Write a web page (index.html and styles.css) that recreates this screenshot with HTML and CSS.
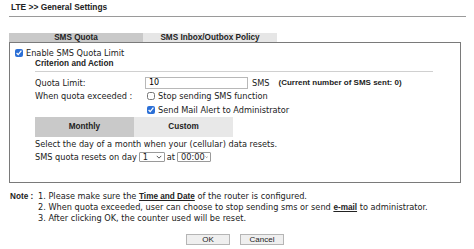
FILE: index.html
```html
<!DOCTYPE html>
<html lang="en">
<head>
    <meta charset="UTF-8">
    <title>LTE General Settings</title>
    <link rel="stylesheet" href="styles.css">
</head>
<body>

    <!-- Page Title -->
    <div class="page-title">LTE &gt;&gt; General Settings</div>

    <!-- Tabs -->
    <div class="tabs">
        <div class="tab active">SMS Quota</div>
        <div class="tab">SMS Inbox/Outbox Policy</div>
    </div>

    <!-- SMS Quota Panel -->
    <div class="panel">
        <label class="enable-row">
            <input type="checkbox" class="cb" checked>
            <span>Enable SMS Quota Limit</span>
        </label>

        <div class="section">
            <div class="section-title">Criterion and Action</div>

            <div class="form-row first">
                <span class="row-label">Quota Limit:</span>
                <input type="text" class="quota-input" value="10">
                <span class="unit">SMS</span>
                <span class="count">(Current number of SMS sent: 0)</span>
            </div>

            <div class="form-row">
                <span class="row-label">When quota exceeded :</span>
                <label class="option">
                    <input type="checkbox" class="cb">
                    <span>Stop sending SMS function</span>
                </label>
            </div>
            <div class="form-row">
                <span class="row-label"></span>
                <label class="option">
                    <input type="checkbox" class="cb" checked>
                    <span>Send Mail Alert to Administrator</span>
                </label>
            </div>

            <div class="sub-tabs">
                <div class="sub-tab active">Monthly</div>
                <div class="sub-tab">Custom</div>
            </div>

            <div class="text-row">Select the day of a month when your (cellular) data resets.</div>
            <div class="text-row">
                <span>SMS quota resets on day</span>
                <span class="select day-select">
                    <span>1</span>
                    <svg class="chevron" viewBox="0 0 8 5"><path d="M1 1 L4 4 L7 1" fill="none" stroke="#333" stroke-width="1.1"/></svg>
                </span>
                <span>at</span>
                <span class="select time-select">
                    <span>00:00</span>
                    <svg class="chevron" viewBox="0 0 8 5"><path d="M1 1 L4 4 L7 1" fill="none" stroke="#333" stroke-width="1.1"/></svg>
                </span>
            </div>
        </div>
    </div>

    <!-- Notes -->
    <div class="notes">
        <div class="note-label">Note :</div>
        <div class="note-list">
            <div>1. Please make sure the <b class="link">Time and Date</b> of the router is configured.</div>
            <div>2. When quota exceeded, user can choose to stop sending sms or send <b class="link">e-mail</b> to administrator.</div>
            <div>3. After clicking OK, the counter used will be reset.</div>
        </div>
    </div>

    <!-- Buttons -->
    <div class="buttons">
        <button class="btn">OK</button>
        <button class="btn">Cancel</button>
    </div>

</body>
</html>
```

FILE: styles.css
```css
/* General Styles */
body {
    margin: 0;
    width: 474px;
    height: 249px;
    background: #fff;
    font-family: "DejaVu Sans", Verdana, sans-serif;
    font-size: 8.2px;
    color: #222;
    overflow: hidden;
}

.page-title {
    font-family: "Liberation Sans", Arial, sans-serif;
    font-weight: bold;
    font-size: 8.4px;
    margin: 0 8px 0 9px;
    padding: 2px 0 0 2px;
    height: 14px;
    line-height: 10px;
    border-bottom: 1px solid #9a9a9a;
}

/* Tabs */
.tabs {
    display: flex;
    margin: 16px 0 0 9px;
}

.tab {
    width: 134px;
    height: 9px;
    line-height: 9px;
    text-align: center;
    font-family: "Liberation Sans", Arial, sans-serif;
    font-weight: bold;
    font-size: 8.2px;
    background: #e6e6e6;
}

.tab.active {
    background: #c9c9c9;
}

.panel {
    margin-left: 9px;
    width: 452px;
    height: 141px;
    border: 1px solid #7a7a7a;
    box-sizing: border-box;
    padding: 5px 0 0 4px;
}

.cb {
    width: 8px;
    height: 8px;
    margin: 0 3px 0 0;
    accent-color: #2b6fd6;
}

.enable-row {
    display: flex;
    align-items: center;
    height: 10px;
    margin-left: 1px;
}

.section {
    margin-left: 21px;
    width: 398px;
}

.section-title {
    font-family: "Liberation Sans", Arial, sans-serif;
    font-weight: bold;
    font-size: 8.2px;
    height: 13px;
    line-height: 11px;
    border-bottom: 1px solid #d0d0d0;
}

.form-row {
    display: flex;
    align-items: center;
    height: 13.5px;
}

.form-row.first {
    margin-top: 4px;
}

.row-label {
    width: 110px;
}

.quota-input {
    width: 103px;
    height: 12px;
    box-sizing: border-box;
    border: 1px solid #b8b8b8;
    font-family: "DejaVu Sans", Verdana, sans-serif;
    font-size: 8px;
    padding: 0 3px;
    margin: 0;
}

.unit {
    margin-left: 4px;
}

.count {
    margin-left: 9px;
    font-family: "Liberation Sans", Arial, sans-serif;
    font-weight: bold;
    font-size: 8px;
}

.option {
    display: flex;
    align-items: center;
    margin-left: 2px;
}

/* Monthly / Custom */
.sub-tabs {
    display: flex;
}

.sub-tab {
    width: 99px;
    height: 20px;
    line-height: 20px;
    text-align: center;
    font-family: "Liberation Sans", Arial, sans-serif;
    font-weight: bold;
    font-size: 8.2px;
    background: #e8e8e8;
}

.sub-tab.active {
    background: #c9c9c9;
}

.text-row {
    display: flex;
    align-items: center;
    gap: 2px;
    height: 12px;
    margin-top: 1px;
}

.select {
    display: flex;
    align-items: center;
    justify-content: space-between;
    height: 10px;
    box-sizing: border-box;
    padding: 0 2px 0 3px;
    border: 1px solid #9a9a9a;
    border-radius: 1px;
    background: #fff;
}

.day-select {
    width: 26px;
}

.time-select {
    width: 34px;
}

.chevron {
    width: 6px;
    height: 4px;
}

/* Notes */
.notes {
    display: flex;
    margin: 8px 0 0 10px;
}

.note-label {
    width: 28px;
    white-space: nowrap;
    font-family: "Liberation Sans", Arial, sans-serif;
    font-weight: bold;
    font-size: 8.2px;
    line-height: 11px;
}

.note-list div {
    line-height: 11px;
}

.link {
    font-family: "Liberation Sans", Arial, sans-serif;
    text-decoration: underline;
}

.buttons {
    display: flex;
    justify-content: center;
    gap: 10px;
    margin-top: 10px;
    padding-right: 4px;
}

.btn {
    width: 44px;
    height: 11px;
    padding: 0;
    font-family: "Liberation Sans", Arial, sans-serif;
    font-size: 8px;
    line-height: 9px;
    color: #222;
    background: #efefef;
    border: 1px solid #b5b5b5;
}
```
